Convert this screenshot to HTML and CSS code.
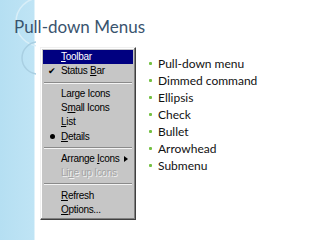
FILE: index.html
```html
<!DOCTYPE html>
<html>
<head>
<meta charset="utf-8">
<link rel="stylesheet" href="styles.css">
</head>
<body>
<div class="slide">
  <svg class="deco" width="36" height="90" viewBox="0 0 36 90">
    <circle cx="40" cy="22" r="24" fill="none" stroke="#d8eef8" stroke-width="1.5"/>
    <circle cx="38" cy="58" r="16" fill="none" stroke="#a9cfe2" stroke-width="1.5"/>
  </svg>
  <h1 class="title">Pull-down Menus</h1>
  <div class="content">
    <div class="menu">
      <div class="item sel"><span class="mark"></span><span><u>T</u>oolbar</span></div>
      <div class="item"><span class="mark">✔</span><span>Status <u>B</u>ar</span></div>
      <div class="sep"></div>
      <div class="item"><span class="mark"></span><span>Lar<u>g</u>e Icons</span></div>
      <div class="item"><span class="mark"></span><span>S<u>m</u>all Icons</span></div>
      <div class="item"><span class="mark"></span><span><u>L</u>ist</span></div>
      <div class="item"><span class="mark"><span class="dot"></span></span><span><u>D</u>etails</span></div>
      <div class="sep"></div>
      <div class="item"><span class="mark"></span><span>Arrange <u>I</u>cons</span><span class="arrow"></span></div>
      <div class="item dim"><span class="mark"></span><span>Li<u>n</u>e up Icons</span></div>
      <div class="sep"></div>
      <div class="item"><span class="mark"></span><span><u>R</u>efresh</span></div>
      <div class="item"><span class="mark"></span><span><u>O</u>ptions...</span></div>
    </div>
    <ul class="bullets">
      <li>Pull-down menu</li>
      <li>Dimmed command</li>
      <li>Ellipsis</li>
      <li>Check</li>
      <li>Bullet</li>
      <li>Arrowhead</li>
      <li>Submenu</li>
    </ul>
  </div>
</div>
</body>
</html>
```
FILE: styles.css
```css
html, body {
  margin: 0;
  padding: 0;
}
body {
  width: 320px;
  height: 240px;
  overflow: hidden;
  background: #ffffff;
}
.slide {
  position: relative;
  width: 320px;
  height: 240px;
  background: linear-gradient(to right, #b5dff2 0, #bfe4f5 34px, #ffffff 35px);
}
.deco {
  position: absolute;
  left: 0;
  top: 0;
}
.title {
  position: relative;
  margin: 0;
  padding: 17px 0 0 14px;
  font-family: "Lato", "Open Sans", sans-serif;
  font-weight: 400;
  font-size: 17px;
  line-height: 20px;
  color: #3a546e;
}
.content {
  display: flex;
  padding: 10px 0 0 40px;
}
.menu {
  width: 96px;
  align-self: flex-start;
  box-sizing: border-box;
  background: #c6c6c6;
  border-top: 1px solid #f0f0f0;
  border-left: 1px solid #f0f0f0;
  border-right: 1px solid #404040;
  border-bottom: 1px solid #404040;
  box-shadow: inset -1px -1px 0 #808080, inset 1px 1px 0 #ffffff;
  padding: 2px 2px;
  font-family: "Liberation Sans", Arial, sans-serif;
  font-size: 10px;
  letter-spacing: -0.3px;
  color: #000;
}
.item {
  display: flex;
  align-items: center;
  height: 14.3px;
  line-height: 14px;
  white-space: nowrap;
}
.item.sel {
  background: #000080;
  color: #ffffff;
}
.item.dim span {
  color: #a4a4a4;
  text-shadow: 1px 1px 0 #f2f2f2;
}
.mark {
  width: 18px;
  flex: none;
  display: flex;
  justify-content: center;
  align-items: center;
  font-size: 9px;
}
.dot {
  width: 5px;
  height: 5px;
  border-radius: 50%;
  background: #000;
}
.arrow {
  margin-left: 5px;
  width: 0;
  height: 0;
  border-top: 3.5px solid transparent;
  border-bottom: 3.5px solid transparent;
  border-left: 4px solid #000;
}
.sep {
  height: 0;
  margin: 3px 1px;
  border-top: 1px solid #8a8a8a;
  border-bottom: 1px solid #f4f4f4;
}
.bullets {
  list-style: none;
  margin: 0;
  padding: 8px 0 0 13px;
  font-family: "Lato", "Open Sans", sans-serif;
  font-size: 12px;
  color: #111;
}
.bullets li {
  position: relative;
  padding-left: 9px;
  height: 17px;
  line-height: 17px;
}
.bullets li::before {
  content: "";
  position: absolute;
  left: 0;
  top: 7px;
  width: 3px;
  height: 3px;
  background: #74c043;
  border-radius: 1px;
}
```
